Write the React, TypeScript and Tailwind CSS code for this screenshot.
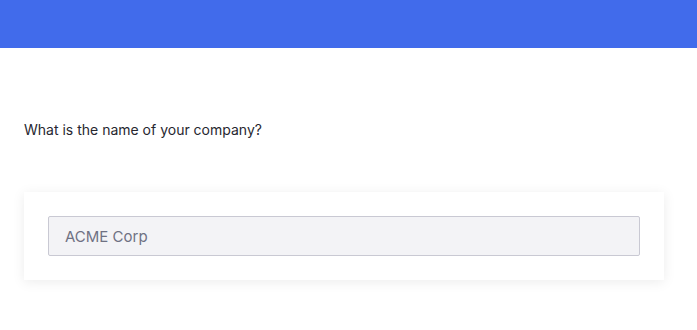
import React from 'react';

export default function App() {
  return (
    <div className="min-h-screen bg-white" style={{ fontFamily: 'Inter, "Liberation Sans", sans-serif' }}>
      <header className="h-12 bg-[#416beb]" />
      <main className="px-6 pt-[72px]">
        <label htmlFor="company" className="block text-sm leading-5 text-[#27272f]">
          What is the name of your company?
        </label>
        <div className="mt-[52px] w-[640px] bg-white p-6 shadow-[0_2px_12px_rgba(0,0,0,0.08)]">
          <input
            id="company"
            type="text"
            placeholder="ACME Corp"
            className="block h-10 w-full rounded-[2px] border border-[#c9c9d3] bg-[#f3f3f6] px-4 text-[15px] text-[#27272f] placeholder:text-[#6f7183] outline-none"
          />
        </div>
      </main>
    </div>
  );
}
